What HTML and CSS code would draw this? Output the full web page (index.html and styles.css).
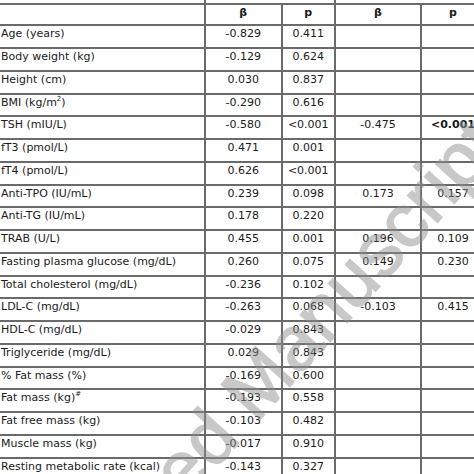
FILE: index.html
```html
<!DOCTYPE html>
<html>
<head>
<meta charset="utf-8">
<link rel="stylesheet" href="styles.css">
</head>
<body>
<div class="page">
  <div class="table">
    <div class="c"></div><div class="c span2"></div><div class="c span2"></div>
    <div class="c"></div><div class="c n b">β</div><div class="c n b">p</div><div class="c n b">β</div><div class="c n b">p</div>
    <div class="c l">Age (years)</div><div class="c n">-0.829</div><div class="c n">0.411</div><div class="c n"></div><div class="c n"></div>
    <div class="c l">Body weight (kg)</div><div class="c n">-0.129</div><div class="c n">0.624</div><div class="c n"></div><div class="c n"></div>
    <div class="c l">Height (cm)</div><div class="c n">0.030</div><div class="c n">0.837</div><div class="c n"></div><div class="c n"></div>
    <div class="c l">BMI (kg/m<sup>2</sup>)</div><div class="c n">-0.290</div><div class="c n">0.616</div><div class="c n"></div><div class="c n"></div>
    <div class="c l">TSH (mIU/L)</div><div class="c n">-0.580</div><div class="c n">&lt;0.001</div><div class="c n">-0.475</div><div class="c n b">&lt;0.001</div>
    <div class="c l">fT3 (pmol/L)</div><div class="c n">0.471</div><div class="c n">0.001</div><div class="c n"></div><div class="c n"></div>
    <div class="c l">fT4 (pmol/L)</div><div class="c n">0.626</div><div class="c n">&lt;0.001</div><div class="c n"></div><div class="c n"></div>
    <div class="c l">Anti-TPO (IU/mL)</div><div class="c n">0.239</div><div class="c n">0.098</div><div class="c n">0.173</div><div class="c n">0.157</div>
    <div class="c l">Anti-TG (IU/mL)</div><div class="c n">0.178</div><div class="c n">0.220</div><div class="c n"></div><div class="c n"></div>
    <div class="c l">TRAB (U/L)</div><div class="c n">0.455</div><div class="c n">0.001</div><div class="c n">0.196</div><div class="c n">0.109</div>
    <div class="c l">Fasting plasma glucose (mg/dL)</div><div class="c n">0.260</div><div class="c n">0.075</div><div class="c n">0.149</div><div class="c n">0.230</div>
    <div class="c l">Total cholesterol (mg/dL)</div><div class="c n">-0.236</div><div class="c n">0.102</div><div class="c n"></div><div class="c n"></div>
    <div class="c l">LDL-C (mg/dL)</div><div class="c n">-0.263</div><div class="c n">0.068</div><div class="c n">-0.103</div><div class="c n">0.415</div>
    <div class="c l">HDL-C (mg/dL)</div><div class="c n">-0.029</div><div class="c n">0.843</div><div class="c n"></div><div class="c n"></div>
    <div class="c l">Triglyceride (mg/dL)</div><div class="c n">0.029</div><div class="c n">0.843</div><div class="c n"></div><div class="c n"></div>
    <div class="c l">% Fat mass (%)</div><div class="c n">-0.169</div><div class="c n">0.600</div><div class="c n"></div><div class="c n"></div>
    <div class="c l">Fat mass (kg)<sup>#</sup></div><div class="c n">-0.193</div><div class="c n">0.558</div><div class="c n"></div><div class="c n"></div>
    <div class="c l">Fat free mass (kg)</div><div class="c n">-0.103</div><div class="c n">0.482</div><div class="c n"></div><div class="c n"></div>
    <div class="c l">Muscle mass (kg)</div><div class="c n">-0.017</div><div class="c n">0.910</div><div class="c n"></div><div class="c n"></div>
    <div class="c l">Resting metabolic rate (kcal)</div><div class="c n">-0.143</div><div class="c n">0.327</div><div class="c n"></div><div class="c n"></div>
  </div>
  <div class="watermark">Accepted Manuscript</div>
</div>
</body>
</html>
```
FILE: styles.css
```css
html, body {
  margin: 0;
  padding: 0;
  overflow: hidden;
  background: #fff;
}
.page {
  position: relative;
  width: 474px;
  height: 474px;
  overflow: hidden;
}
.table {
  display: grid;
  grid-template-columns: 204px 74.5px 51.5px 84px 62px;
  grid-template-rows: 2.8px 19.7px;
  grid-auto-rows: 20.75px;
  gap: 2px;
  background: #6a6a6a;
  width: max-content;
  font-family: "DejaVu Sans", Verdana, sans-serif;
  font-size: 11px;
  line-height: 13px;
  color: #1a1a1a;
}
.c {
  background: #fff;
  padding-top: 1px;
  white-space: nowrap;
  overflow: hidden;
}
.span2 {
  grid-column: span 2;
}
.l {
  padding-left: 1px;
}
.n {
  text-align: center;
}
.b {
  font-weight: bold;
}
sup {
  font-size: 7px;
  line-height: 0;
  vertical-align: 5px;
}
.watermark {
  position: absolute;
  left: 248px;
  top: 394px;
  transform: translate(-50%, -50%) rotate(-48deg);
  white-space: nowrap;
  font-family: "Liberation Sans", Arial, sans-serif;
  font-size: 76px;
  line-height: 1;
  color: #8e8e8e;
  -webkit-text-stroke: 1.5px #8e8e8e;
  opacity: 0.48;
  pointer-events: none;
}
```
